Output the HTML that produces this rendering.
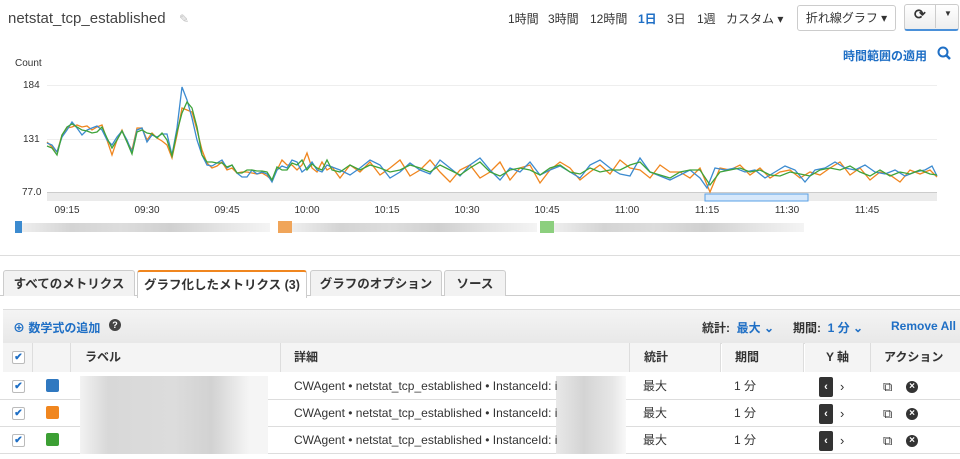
<!DOCTYPE html>
<html><head><meta charset="utf-8">
<style>
body{margin:0;width:960px;height:459px;overflow:hidden;background:#fff;font-family:"Liberation Sans","Noto Sans CJK JP",sans-serif;color:#333;position:relative}
.a{position:absolute}
.t{font-size:12px;color:#333}
.blue{color:#1f6fc5}
.tab{position:absolute;top:270px;height:25px;background:#f2f2f2;border:1px solid #ccc;border-bottom:none;font-size:12.5px;font-weight:bold;color:#333;text-align:center;line-height:26px;border-radius:3px 3px 0 0}
.hd{position:absolute;top:343px;height:29px;background:#f4f4f4;border-right:1px solid #ddd;font-size:12px;font-weight:bold;line-height:29px;color:#333}
.row{position:absolute;left:0;width:960px;height:26px;border-bottom:1px solid #ddd}
.cb{position:absolute;left:12px;width:11px;height:11px;border:1px solid #bbb;border-radius:2px;background:#fff;color:#1f6fc5;font-size:10px;line-height:11px;text-align:center;font-weight:bold}
.sw{position:absolute;left:46px;width:13px;height:13px;border-radius:2px}
.blur{position:absolute;background:linear-gradient(90deg,#eee,#d4d4d4 20%,#ddd 40%,#d0d0d0 60%,#e4e4e4 80%,#f4f4f4)}
.yb{position:absolute;left:819px;width:14px;height:20px;background:#333;border-radius:2px;color:#fff;font-size:11px;text-align:center;line-height:20px;font-weight:bold}
.x{position:absolute;left:906px;width:12px;height:12px;border-radius:50%;background:#333;color:#fff;font-size:10px;text-align:center;line-height:12px;font-weight:bold}
</style></head><body>
<div class="a" style="left:8px;top:10px;font-size:15px;color:#444">netstat_tcp_established</div>
<div class="a" style="left:179px;top:12px;font-size:12px;color:#bbb">✎</div>
<div class="a t" style="left:508px;top:10px">1時間</div>
<div class="a t" style="left:548px;top:10px">3時間</div>
<div class="a t" style="left:590px;top:10px">12時間</div>
<div class="a t" style="left:638px;top:10px;color:#1f6fc5;font-weight:bold">1日</div>
<div class="a t" style="left:667px;top:10px">3日</div>
<div class="a t" style="left:697px;top:10px">1週</div>
<div class="a t" style="left:726px;top:10px">カスタム ▾</div>
<div class="a" style="left:797px;top:5px;width:97px;height:24px;border:1px solid #ccc;border-radius:3px;font-size:12px;line-height:24px;text-align:center">折れ線グラフ ▾</div>
<div class="a" style="left:904px;top:4px;width:53px;height:24px;border:1px solid #ccc;border-radius:3px;background:linear-gradient(#fff,#eee);border-bottom:2px solid #4a90d9"></div>
<div class="a" style="left:935px;top:5px;width:1px;height:23px;background:#ccc"></div>
<div class="a" style="left:914px;top:6px;font-size:14px;font-weight:bold;color:#333">⟳</div>
<div class="a" style="left:944px;top:9px;font-size:8px">▼</div>
<div class="a" style="left:843px;top:47px;font-size:12px;font-weight:bold;color:#1f6fc5">時間範囲の適用</div>
<svg class="a" style="left:936px;top:45px" width="16" height="16"><circle cx="7" cy="7" r="4.5" fill="none" stroke="#1f6fc5" stroke-width="2"/><line x1="10" y1="10" x2="14" y2="14" stroke="#1f6fc5" stroke-width="2.5"/></svg>
<div class="a" style="left:15px;top:58px;font-size:10px">Count</div>
<div class="a" style="left:23px;top:80px;font-size:10px">184</div>
<div class="a" style="left:23px;top:134px;font-size:10px">131</div>
<div class="a" style="left:22px;top:187px;font-size:10px">77.0</div>
<svg class="a" style="left:0;top:0" width="960" height="240">
<line x1="47" y1="85.5" x2="937" y2="85.5" stroke="#eee"/>
<line x1="47" y1="139.5" x2="937" y2="139.5" stroke="#eee"/>
<rect x="47" y="192" width="890" height="9" fill="#ebebeb"/>
<line x1="47" y1="192.5" x2="937" y2="192.5" stroke="#ccc"/>
<rect x="705" y="194" width="103" height="7" fill="#d6e8fb" stroke="#5aa0e6"/>
<polyline fill="none" stroke="#f0861f" stroke-width="1.3" points="47,142 52,147 57,152 62,135 67,128 72,127 77,125 82,127 87,126 92,130 97,127 102,125 107,140 112,155 117,140 122,130 127,142 132,150 137,128 142,128 147,140 152,133 157,138 162,141 167,145 172,158 177,135 182,108 187,110 192,112 197,130 202,150 207,163 212,168 217,166 222,162 227,170 232,168 237,173 242,172 247,172 252,173 257,174 262,173 267,176 272,180 277,170 282,160 287,165 292,165 297,170 302,165 307,153 312,168 317,172 322,162 327,170 332,167 340,178 350,165 360,172 370,162 380,175 390,168 400,160 410,176 420,170 430,160 440,172 450,182 460,170 470,165 480,178 490,172 500,162 510,180 520,168 530,165 540,183 550,170 560,162 570,168 580,180 590,172 600,165 610,174 620,160 630,168 640,170 650,178 660,165 670,172 680,172 690,178 700,168 710,192 720,168 730,170 740,165 750,175 760,168 770,178 780,172 790,170 800,178 810,172 820,175 830,168 840,162 850,175 860,168 870,180 880,172 890,175 900,182 910,170 920,174 930,170 937,177"/>
<polyline fill="none" stroke="#3c8bd0" stroke-width="1.3" points="47,143 52,145 57,152 62,137 67,130 72,122 77,128 82,135 87,130 92,128 97,126 102,130 107,140 112,145 117,137 122,131 127,140 132,152 137,130 142,128 147,142 152,135 157,137 162,134 167,134 172,155 177,128 182,87 187,100 192,118 197,140 202,155 207,165 212,166 217,163 222,160 227,168 232,165 237,173 242,177 247,177 252,170 257,174 262,172 267,174 272,182 277,170 282,166 287,168 292,160 297,162 302,172 307,168 312,162 317,170 322,172 327,165 332,167 340,170 350,175 360,168 370,160 380,165 390,178 400,172 410,163 420,170 430,174 440,160 450,168 460,176 470,165 480,158 490,170 500,180 510,168 520,172 530,162 540,175 550,170 560,166 570,172 580,178 590,165 600,160 610,168 620,174 630,176 640,158 650,172 660,176 670,180 680,175 690,170 700,178 707,188 715,168 725,170 735,168 745,172 755,170 765,178 775,172 785,166 795,170 805,182 815,170 825,168 835,162 845,168 855,170 865,165 875,172 885,174 895,170 905,176 915,172 925,170 932,166 937,176"/>
<polyline fill="none" stroke="#3ea33a" stroke-width="1.3" points="47,146 52,148 57,155 62,135 67,127 72,124 77,127 82,130 87,131 92,133 97,132 102,127 107,138 112,148 117,140 122,131 127,142 132,154 137,132 142,130 147,133 152,134 157,138 162,133 167,140 172,156 177,132 182,113 187,102 192,108 197,127 202,155 207,162 212,162 217,163 222,163 227,167 232,165 237,173 242,173 247,170 252,170 257,171 262,171 267,172 272,180 277,167 282,170 287,170 292,163 297,165 302,160 307,170 312,164 317,168 322,170 327,160 332,170 340,172 350,165 360,170 370,165 380,168 390,172 400,170 410,165 420,168 430,172 440,165 450,170 460,175 470,168 480,162 490,172 500,176 510,170 520,168 530,170 540,175 550,168 560,165 570,172 580,174 590,168 600,172 610,170 620,170 630,165 640,162 650,172 660,175 670,178 680,172 690,170 700,170 710,185 720,172 730,170 740,168 750,172 760,170 770,175 780,176 790,172 800,174 810,176 820,170 830,168 840,170 850,166 860,172 870,176 880,170 890,176 900,172 910,174 920,170 930,174 937,175"/>
<g font-size="10" fill="#333" font-family="Liberation Sans,sans-serif" text-anchor="middle">
<text x="67" y="213">09:15</text><text x="147" y="213">09:30</text><text x="227" y="213">09:45</text><text x="307" y="213">10:00</text><text x="387" y="213">10:15</text><text x="467" y="213">10:30</text><text x="547" y="213">10:45</text><text x="627" y="213">11:00</text><text x="707" y="213">11:15</text><text x="787" y="213">11:30</text><text x="867" y="213">11:45</text></g>
</svg>
<div class="a" style="left:15px;top:221px;width:7px;height:12px;background:#3c8bd0"></div>
<div class="blur" style="left:22px;top:223px;width:248px;height:9px"></div>
<div class="a" style="left:278px;top:221px;width:14px;height:12px;background:#f0a55a"></div>
<div class="blur" style="left:292px;top:223px;width:245px;height:9px"></div>
<div class="a" style="left:540px;top:221px;width:14px;height:12px;background:#8ccf7e"></div>
<div class="blur" style="left:554px;top:223px;width:250px;height:9px"></div>
<div class="a" style="left:0;top:255px;width:960px;height:1px;background:#ddd"></div>
<div class="a" style="left:0;top:295px;width:960px;height:1px;background:#ccc"></div>
<div class="tab" style="left:3px;width:130px">すべてのメトリクス</div>
<div class="tab" style="left:137px;width:168px;background:#fff;border-top:2px solid #f0861f;height:26px">グラフ化したメトリクス (3)</div>
<div class="tab" style="left:310px;width:130px">グラフのオプション</div>
<div class="tab" style="left:444px;width:60px">ソース</div>
<div class="a" style="left:3px;top:309px;width:957px;height:33px;background:linear-gradient(#f4f4f4,#e8e8e8);border-top:1px solid #ddd;border-bottom:1px solid #ddd"></div>
<div class="a" style="left:13px;top:319px;font-size:12px;font-weight:bold;color:#1f6fc5">⊕ 数学式の追加</div>
<div class="a" style="left:109px;top:319px;width:12px;height:12px;border-radius:50%;background:#444;color:#fff;font-size:9px;text-align:center;line-height:12px;font-weight:bold">?</div>
<div class="a" style="left:702px;top:319px;font-size:12px;font-weight:bold">統計: <span class="blue">&nbsp;最大 ⌄</span></div>
<div class="a" style="left:793px;top:319px;font-size:12px;font-weight:bold">期間: <span class="blue">&nbsp;1 分 ⌄</span></div>
<div class="a" style="left:891px;top:319px;font-size:12px;font-weight:bold;color:#1f6fc5">Remove All</div>
<div class="hd" style="left:3px;width:29px"></div>
<div class="cb" style="top:351px">✔</div>
<div class="hd" style="left:33px;width:37px"></div>
<div class="hd" style="left:71px;padding-left:14px;box-sizing:border-box;width:210px">ラベル</div>
<div class="hd" style="left:281px;width:349px;padding-left:13px;box-sizing:border-box">詳細</div>
<div class="hd" style="left:630px;width:91px;padding-left:14px;box-sizing:border-box">統計</div>
<div class="hd" style="left:722px;width:82px;padding-left:13px;box-sizing:border-box">期間</div>
<div class="hd" style="left:805px;width:65px;text-align:center">Y 軸</div>
<div class="hd" style="left:871px;width:89px;padding-left:13px;box-sizing:border-box;border-right:none">アクション</div>
<div class="row" style="top:373px"></div><div class="row" style="top:400px"></div><div class="row" style="top:427px"></div>
<div class="cb" style="top:380px">✔</div><div class="cb" style="top:407px">✔</div><div class="cb" style="top:434px">✔</div>
<div class="sw" style="top:379px;background:#2f78c0"></div><div class="sw" style="top:406px;background:#f0861f"></div><div class="sw" style="top:433px;background:#3c9f34"></div>
<div class="blur" style="left:80px;top:376px;width:188px;height:78px;background:linear-gradient(90deg,#f2f2f2,#d8d8d8 15%,#dcdcdc 50%,#d2d2d2 70%,#f5f5f5 90%)"></div>
<div class="blur" style="left:556px;top:376px;width:70px;height:78px;background:linear-gradient(90deg,#e8e8e8,#d4d4d4 40%,#e6e6e6 80%,#f8f8f8)"></div>
<div class="a" style="left:294px;top:373px;font-size:12px;line-height:27px">CWAgent • netstat_tcp_established • InstanceId: i<br>CWAgent • netstat_tcp_established • InstanceId: i<br>CWAgent • netstat_tcp_established • InstanceId: i</div>
<div class="a" style="left:643px;top:373px;font-size:12px;line-height:27px">最大<br>最大<br>最大</div>
<div class="a" style="left:734px;top:373px;font-size:12px;line-height:27px">1 分<br>1 分<br>1 分</div>
<div class="yb" style="top:377px">‹</div>
<div class="yb" style="top:404px">‹</div>
<div class="yb" style="top:431px">‹</div>
<div class="a" style="left:840px;top:373px;font-size:13px;line-height:27px">›<br>›<br>›</div>
<div class="a" style="left:883px;top:373px;font-size:13px;line-height:27px">⧉<br>⧉<br>⧉</div>
<div class="x" style="top:381px">×</div>
<div class="x" style="top:408px">×</div>
<div class="x" style="top:435px">×</div>
</body></html>
